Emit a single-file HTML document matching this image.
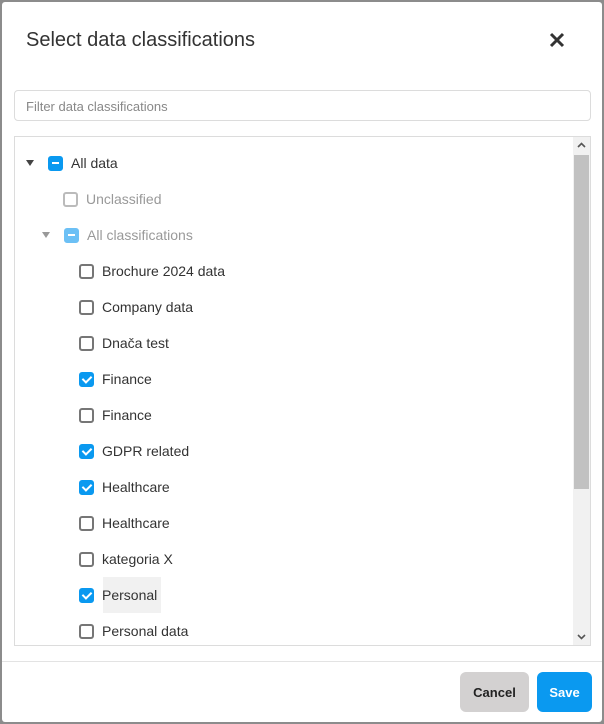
<!DOCTYPE html><html><head><style>
*{box-sizing:border-box;margin:0;padding:0}
body{width:604px;height:724px;background:#8c8c8c;font-family:"Liberation Sans",Arial,sans-serif;position:relative;overflow:hidden}
.dlg{position:absolute;left:2px;top:2px;width:600px;height:720px;background:#fff;border-radius:3px}
.t{position:absolute;left:24px;top:27px;font-size:20px;color:#333}
.x{position:absolute;left:547px;top:30px}
.inp{position:absolute;left:12px;top:88px;width:577px;height:31px;border:1px solid #dcdcdc;border-radius:4px;font-size:13px;color:#888;padding:8px 11px}
.tree{position:absolute;left:12px;top:134px;width:577px;height:510px;border:1px solid #dcdcdc;overflow:hidden}
.sb{position:absolute;right:0;top:0;width:17px;height:508px;background:#f1f1f1}
.th{position:absolute;left:1px;top:18px;width:15px;height:334px;background:#c1c1c1}
.row{position:absolute;height:36px;display:flex;align-items:center;font-size:14px;color:#333}
.cb{width:15px;height:15px;border:2px solid #767676;border-radius:3px;margin-right:8px;position:relative;flex:none}
.on{background:#0a99f0;border-color:#0a99f0}
.on:after{content:"";position:absolute;left:3px;top:0px;width:4px;height:7px;border:solid #fff;border-width:0 2px 2px 0;transform:rotate(45deg)}
.ind{background:#0a99f0;border-color:#0a99f0}
.ind:after{content:"";position:absolute;left:2px;top:4.5px;width:7px;height:2px;background:#fff}
.arr{width:0;height:0;border-left:4.5px solid transparent;border-right:4.5px solid transparent;border-top:6px solid #444;margin-right:14px}
.ft{position:absolute;left:0;top:659px;width:600px;border-top:1px solid #e3e3e3}
.btn{position:absolute;top:670px;height:40px;border-radius:6px;font-size:13px;font-weight:bold;display:flex;align-items:center;justify-content:center}
</style></head><body><div class="dlg">
<div class="t">Select data classifications</div>
<svg class="x" width="16" height="16" viewBox="0 0 16 16"><path d="M2 2L14 14M14 2L2 14" stroke="#333" stroke-width="3"/></svg>
<div class="inp">Filter data classifications</div>
<div class="tree">
<div class="row" style="left:11px;top:8px"><div class="arr"></div><div class="cb ind"></div>All data</div>
<div class="row" style="left:48px;top:44px;color:#999"><div class="cb" style="border-color:#bbb"></div>Unclassified</div>
<div class="row" style="left:27px;top:80px;color:#999"><div class="arr" style="border-top-color:#999"></div><div class="cb ind" style="background:#6cc0f5;border-color:#6cc0f5"></div>All classifications</div>
<div style="position:absolute;left:88px;top:440px;width:58px;height:36px;background:#f1f1f1"></div>
<div class="row" style="left:64px;top:116px"><div class="cb"></div>Brochure 2024 data</div>
<div class="row" style="left:64px;top:152px"><div class="cb"></div>Company data</div>
<div class="row" style="left:64px;top:188px"><div class="cb"></div>Dnača test</div>
<div class="row" style="left:64px;top:224px"><div class="cb on"></div>Finance</div>
<div class="row" style="left:64px;top:260px"><div class="cb"></div>Finance</div>
<div class="row" style="left:64px;top:296px"><div class="cb on"></div>GDPR related</div>
<div class="row" style="left:64px;top:332px"><div class="cb on"></div>Healthcare</div>
<div class="row" style="left:64px;top:368px"><div class="cb"></div>Healthcare</div>
<div class="row" style="left:64px;top:404px"><div class="cb"></div>kategoria X</div>
<div class="row" style="left:64px;top:440px"><div class="cb on"></div>Personal</div>
<div class="row" style="left:64px;top:476px"><div class="cb"></div>Personal data</div>
<div class="sb"><div class="th"></div>
<svg style="position:absolute;left:4px;top:5px" width="9" height="6"><path d="M1 5L4.5 1.5L8 5" stroke="#555" stroke-width="1.6" fill="none"/></svg>
<svg style="position:absolute;left:4px;top:497px" width="9" height="6"><path d="M1 1L4.5 4.5L8 1" stroke="#555" stroke-width="1.6" fill="none"/></svg>
</div></div>
<div class="ft"></div>
<div class="btn" style="left:458px;width:69px;background:#d3d1d1;color:#222">Cancel</div>
<div class="btn" style="left:535px;width:55px;background:#0a99f0;color:#fff">Save</div>
</div></body></html>
